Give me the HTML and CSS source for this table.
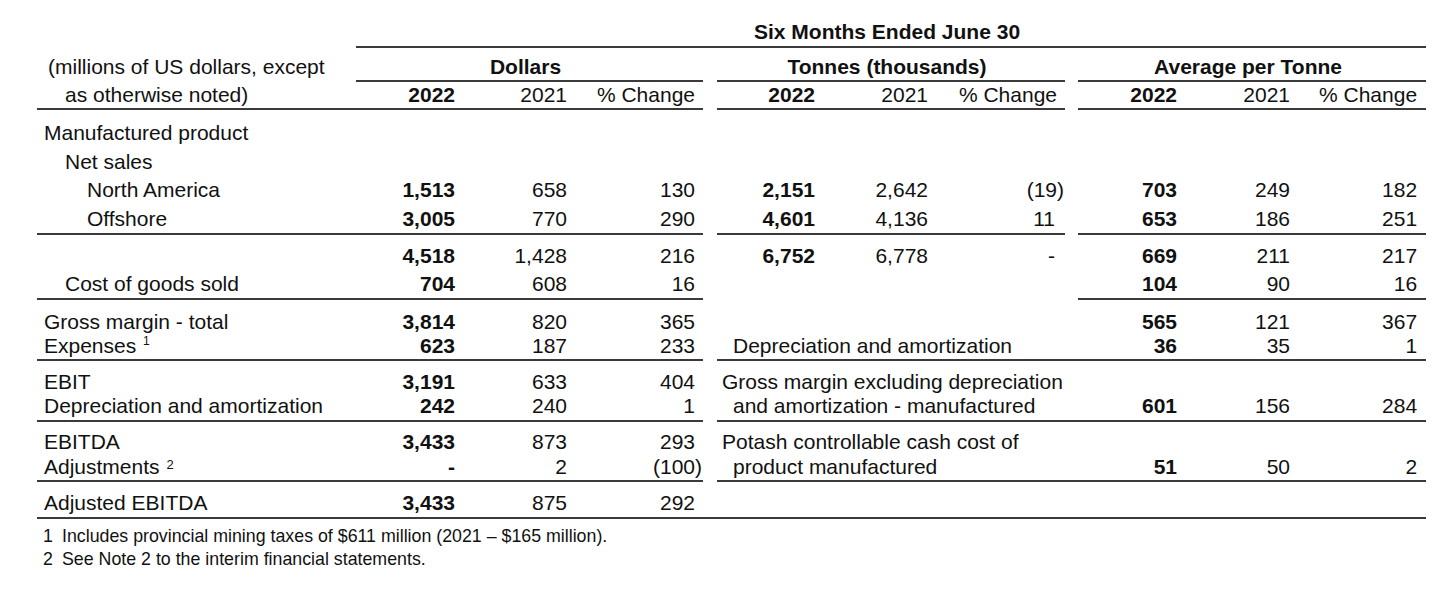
FILE: index.html
```html
<!DOCTYPE html>
<html lang="en">
<head>
<meta charset="utf-8">
<title>Six Months Ended June 30</title>
<link rel="stylesheet" href="styles.css">
</head>
<body>
<div class="report">
<table class="fin">
  <colgroup>
    <col class="c-lab"><col class="c-d1"><col class="c-d2"><col class="c-d3"><col class="c-g1">
    <col class="c-t1"><col class="c-t2"><col class="c-t3"><col class="c-g2">
    <col class="c-a1"><col class="c-a2"><col class="c-a3">
  </colgroup>
  <tr class="ruled r-h1">
    <td></td>
    <td class="hd ln" colspan="11">Six Months Ended June 30</td>
  </tr>
  <tr class="ruled r-h2">
    <td class="lab lab-h1">(millions of US dollars, except</td>
    <td class="hd ln" colspan="3">Dollars</td>
    <td></td>
    <td class="hd ln" colspan="3">Tonnes (thousands)</td>
    <td></td>
    <td class="hd ln" colspan="3">Average per Tonne</td>
  </tr>
  <tr class="ruled r-h3">
    <td class="lab lab1 ln">as otherwise noted)</td>
    <td class="b ln">2022</td><td class="ln">2021</td><td class="ln">% Change</td>
    <td></td>
    <td class="b ln">2022</td><td class="ln">2021</td><td class="ln">% Change</td>
    <td></td>
    <td class="b ln">2022</td><td class="ln">2021</td><td class="ln pr9">% Change</td>
  </tr>
  <tr class="r-mp">
    <td class="lab">Manufactured product</td><td colspan="11"></td>
  </tr>
  <tr class="r-ns">
    <td class="lab lab1">Net sales</td><td colspan="11"></td>
  </tr>
  <tr class="r-na">
    <td class="lab lab2">North America</td>
    <td class="b">1,513</td><td>658</td><td>130</td>
    <td></td>
    <td class="b">2,151</td><td>2,642</td><td><span class="neg">(19)</span></td>
    <td></td>
    <td class="b">703</td><td>249</td><td class="pr9">182</td>
  </tr>
  <tr class="ruled r-off">
    <td class="lab lab2 ln">Offshore</td>
    <td class="b ln">3,005</td><td class="ln">770</td><td class="ln">290</td>
    <td></td>
    <td class="b ln">4,601</td><td class="ln">4,136</td><td class="ln pr10">11</td>
    <td></td>
    <td class="b ln">653</td><td class="ln">186</td><td class="ln pr9">251</td>
  </tr>
  <tr class="r-tot">
    <td class="lab"></td>
    <td class="b">4,518</td><td>1,428</td><td>216</td>
    <td></td>
    <td class="b">6,752</td><td>6,778</td><td class="pr10">-</td>
    <td></td>
    <td class="b">669</td><td>211</td><td class="pr9">217</td>
  </tr>
  <tr class="ruled r-cogs">
    <td class="lab lab1 ln">Cost of goods sold</td>
    <td class="b ln">704</td><td class="ln">608</td><td class="ln">16</td>
    <td></td>
    <td colspan="3"></td>
    <td></td>
    <td class="b ln">104</td><td class="ln">90</td><td class="ln pr9">16</td>
  </tr>
  <tr class="r-gm">
    <td class="lab">Gross margin - total</td>
    <td class="b">3,814</td><td>820</td><td>365</td>
    <td></td>
    <td colspan="3"></td>
    <td></td>
    <td class="b">565</td><td>121</td><td class="pr9">367</td>
  </tr>
  <tr class="ruled r-exp">
    <td class="lab ln">Expenses <sup class="fn1">1</sup></td>
    <td class="b ln">623</td><td class="ln">187</td><td class="ln">233</td>
    <td></td>
    <td class="rl rl2 ln" colspan="3">Depreciation and amortization</td>
    <td class="ln"></td>
    <td class="b ln">36</td><td class="ln">35</td><td class="ln pr9">1</td>
  </tr>
  <tr class="r-ebit">
    <td class="lab">EBIT</td>
    <td class="b">3,191</td><td>633</td><td>404</td>
    <td></td>
    <td class="rl" colspan="3">Gross margin excluding depreciation</td>
    <td></td>
    <td colspan="3"></td>
  </tr>
  <tr class="ruled r-da">
    <td class="lab ln">Depreciation and amortization</td>
    <td class="b ln">242</td><td class="ln">240</td><td class="ln">1</td>
    <td></td>
    <td class="rl rl2 ln" colspan="3">and amortization - manufactured</td>
    <td class="ln"></td>
    <td class="b ln">601</td><td class="ln">156</td><td class="ln pr9">284</td>
  </tr>
  <tr class="r-ebitda">
    <td class="lab">EBITDA</td>
    <td class="b">3,433</td><td>873</td><td>293</td>
    <td></td>
    <td class="rl" colspan="3">Potash controllable cash cost of</td>
    <td></td>
    <td colspan="3"></td>
  </tr>
  <tr class="ruled r-adj">
    <td class="lab ln">Adjustments <sup class="fn2">2</sup></td>
    <td class="b ln">-</td><td class="ln">2</td><td class="ln"><span class="neg">(100)</span></td>
    <td></td>
    <td class="rl rl2 ln" colspan="3">product manufactured</td>
    <td class="ln"></td>
    <td class="b ln">51</td><td class="ln">50</td><td class="ln pr9">2</td>
  </tr>
  <tr class="ruled r-aebitda">
    <td class="lab ln">Adjusted EBITDA</td>
    <td class="b ln">3,433</td><td class="ln">875</td><td class="ln">292</td>
    <td class="ln"></td>
    <td class="ln" colspan="3"></td>
    <td class="ln"></td>
    <td class="ln" colspan="3"></td>
  </tr>
</table>
<div class="notes">
  <p class="note"><span class="num">1</span>Includes provincial mining taxes of $611 million (2021 – $165 million).</p>
  <p class="note"><span class="num">2</span>See Note 2 to the interim financial statements.</p>
</div>
</div>
</body>
</html>
```

FILE: styles.css
```css
html, body {
  margin: 0;
  background: #ffffff;
}

body {
  color: #111111;
  font-family: "Liberation Sans", Arial, sans-serif;
  font-size: 21px;
}

.report {
  padding: 14px 0 0 37px;
}

.fin {
  border-collapse: separate;
  border-spacing: 0;
  table-layout: fixed;
  width: 1389px;
}

.c-lab { width: 319px; }
.c-d1 { width: 107px; }
.c-d2 { width: 112px; }
.c-d3 { width: 128px; }
.c-g1 { width: 14px; }
.c-t1 { width: 106px; }
.c-t2 { width: 113px; }
.c-t3 { width: 129px; }
.c-g2 { width: 13px; }
.c-a1 { width: 107px; }
.c-a2 { width: 113px; }
.c-a3 { width: 128px; }

.fin td {
  padding: 0 8px 0 0;
  line-height: 24px;
  white-space: nowrap;
  text-align: right;
  vertical-align: bottom;
  overflow: visible;
}

.fin tr.ruled > td {
  border-bottom: 2px solid transparent;
}

.fin tr.ruled > td.ln {
  border-bottom-color: #3a3a3a;
}

/* row spacing */
.r-h1 > td { padding-top: 6px !important; padding-bottom: 2px !important; }
.r-h2 > td { padding-top: 7px !important; padding-bottom: 1px !important; }
.r-h3 > td { padding-top: 1px !important; padding-bottom: 1px !important; }
.r-mp > td { padding-top: 11px !important; padding-bottom: 2px !important; }
.r-ns > td { padding-top: 3px !important; padding-bottom: 2px !important; }
.r-na > td { padding-top: 2px !important; padding-bottom: 2px !important; }
.r-off > td { padding-top: 3px !important; padding-bottom: 2px !important; }
.r-tot > td { padding-top: 9px !important; padding-bottom: 2px !important; }
.r-cogs > td { padding-top: 2px !important; padding-bottom: 2px !important; }
.r-gm > td { padding-top: 10px !important; padding-bottom: 0 !important; }
.r-exp > td { padding-top: 0 !important; padding-bottom: 1px !important; }
.r-ebit > td { padding-top: 9px !important; padding-bottom: 0 !important; }
.r-da > td { padding-top: 0 !important; padding-bottom: 2px !important; }
.r-ebitda > td { padding-top: 8px !important; padding-bottom: 0 !important; }
.r-adj > td { padding-top: 1px !important; padding-bottom: 1px !important; }
.r-aebitda > td { padding-top: 9px !important; padding-bottom: 2px !important; }

.hd {
  text-align: center !important;
  font-weight: bold;
}

.b {
  font-weight: bold;
}

.lab {
  text-align: left !important;
  padding-left: 7px !important;
}

.lab-h1 {
  padding-left: 11px !important;
}

.lab1 {
  padding-left: 28px !important;
}

.lab2 {
  padding-left: 50px !important;
}

.rl {
  text-align: left !important;
  padding-left: 5px !important;
}

.rl2 {
  padding-left: 16px !important;
}

.pr9 { padding-right: 9px !important; }
.pr10 { padding-right: 10px !important; }

.neg {
  margin-right: -7px;
}

sup {
  line-height: 0;
}

.fn1 {
  font-size: 12px;
  vertical-align: 8px;
  margin-left: 1px;
}

.fn2 {
  font-size: 13px;
  vertical-align: 5px;
  margin-left: 1px;
}

.notes {
  padding: 6px 0 0 6px;
  font-size: 17.8px;
}

.note {
  margin: 0;
  line-height: 23px;
  white-space: nowrap;
}

.num {
  display: inline-block;
  width: 19px;
}
```
